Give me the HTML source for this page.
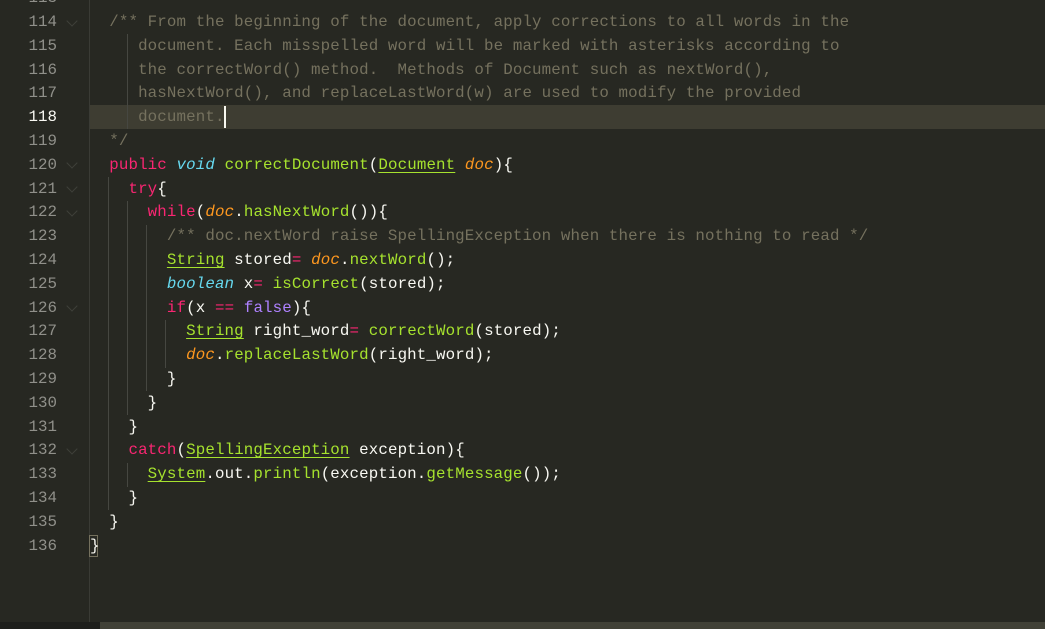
<!DOCTYPE html>
<html><head><meta charset="utf-8"><style>
html,body{margin:0;padding:0;width:1045px;height:629px;overflow:hidden;background:#272822;}
.wrap{position:relative;width:1045px;height:629px;font-family:"Liberation Mono",monospace;font-size:15.8px;}
.ln{position:absolute;left:0;width:57px;text-align:right;color:#90908a;height:23.8px;line-height:23.8px;margin-top:2px}
.code{position:absolute;left:90px;white-space:pre;color:#f8f8f2;height:23.8px;line-height:23.8px;letter-spacing:0.13px;margin-top:2px}
.hl{position:absolute;left:90px;width:955px;height:23.8px;background:#3e3d32;}
.c{color:#75715e}.k{color:#f92672}.s{color:#66d9ef;font-style:italic}.f{color:#a6e22e}.p{color:#fd971f;font-style:italic}.n{color:#ae81ff}
.u{color:#a6e22e;text-decoration:underline;text-underline-offset:3px}
.g{position:absolute;width:1px;background:#464741}
.fold{position:absolute;left:68px;width:7px;height:7px;border-right:1px solid #3f403a;border-bottom:1px solid #3f403a;transform:rotate(45deg);margin-top:2px}
</style></head><body><div class="wrap">
<div class="hl" style="top:105px"></div>
<div style="position:absolute;left:89px;top:0;width:1px;height:622px;background:#3a3b35"></div>
<div style="position:absolute;left:0;top:622px;width:100px;height:7px;background:#1e1f1c"></div>
<div style="position:absolute;left:100px;top:622px;width:945px;height:7px;background:#414137"></div>
<div class="g" style="left:127px;top:34px;height:95px"></div>
<div class="g" style="left:108px;top:177px;height:333px"></div>
<div class="g" style="left:127px;top:201px;height:214px"></div>
<div class="g" style="left:146px;top:225px;height:166px"></div>
<div class="g" style="left:165px;top:320px;height:48px"></div>
<div class="g" style="left:127px;top:463px;height:24px"></div>
<div style="position:absolute;left:224px;top:106px;width:2px;height:22px;background:#f8f8f0"></div>
<div style="position:absolute;left:89px;top:535px;width:9px;height:22px;border:1px solid #75715e;box-sizing:border-box"></div>

<div class="ln" style="top:-14.8px">113</div>
<div class="ln" style="top:9px">114</div><div class="fold" style="top:15px"></div>
<div class="ln" style="top:32.8px">115</div>
<div class="ln" style="top:56.6px">116</div>
<div class="ln" style="top:80.4px">117</div>
<div class="ln" style="top:104.2px;color:#f8f8f2">118</div>
<div class="ln" style="top:128px">119</div>
<div class="ln" style="top:151.8px">120</div><div class="fold" style="top:157px"></div>
<div class="ln" style="top:175.6px">121</div><div class="fold" style="top:181px"></div>
<div class="ln" style="top:199.4px">122</div><div class="fold" style="top:205px"></div>
<div class="ln" style="top:223.2px">123</div>
<div class="ln" style="top:247px">124</div>
<div class="ln" style="top:270.8px">125</div>
<div class="ln" style="top:294.6px">126</div><div class="fold" style="top:300px"></div>
<div class="ln" style="top:318.4px">127</div>
<div class="ln" style="top:342.2px">128</div>
<div class="ln" style="top:366px">129</div>
<div class="ln" style="top:389.8px">130</div>
<div class="ln" style="top:413.6px">131</div>
<div class="ln" style="top:437.4px">132</div><div class="fold" style="top:443px"></div>
<div class="ln" style="top:461.2px">133</div>
<div class="ln" style="top:485px">134</div>
<div class="ln" style="top:508.8px">135</div>
<div class="ln" style="top:532.6px">136</div>

<div class="code" style="top:9px">  <span class="c">/** From the beginning of the document, apply corrections to all words in the</span></div>
<div class="code" style="top:32.8px">     <span class="c">document. Each misspelled word will be marked with asterisks according to</span></div>
<div class="code" style="top:56.6px">     <span class="c">the correctWord() method.  Methods of Document such as nextWord(),</span></div>
<div class="code" style="top:80.4px">     <span class="c">hasNextWord(), and replaceLastWord(w) are used to modify the provided</span></div>
<div class="code" style="top:104.2px">     <span class="c">document.</span></div>
<div class="code" style="top:128px">  <span class="c">*/</span></div>
<div class="code" style="top:151.8px">  <span class="k">public</span> <span class="s">void</span> <span class="f">correctDocument</span>(<span class="u">Document</span> <span class="p">doc</span>){</div>
<div class="code" style="top:175.6px">    <span class="k">try</span>{</div>
<div class="code" style="top:199.4px">      <span class="k">while</span>(<span class="p">doc</span>.<span class="f">hasNextWord</span>()){</div>
<div class="code" style="top:223.2px">        <span class="c">/** doc.nextWord raise SpellingException when there is nothing to read */</span></div>
<div class="code" style="top:247px">        <span class="u">String</span> stored<span class="k">=</span> <span class="p">doc</span>.<span class="f">nextWord</span>();</div>
<div class="code" style="top:270.8px">        <span class="s">boolean</span> x<span class="k">=</span> <span class="f">isCorrect</span>(stored);</div>
<div class="code" style="top:294.6px">        <span class="k">if</span>(x <span class="k">==</span> <span class="n">false</span>){</div>
<div class="code" style="top:318.4px">          <span class="u">String</span> right_word<span class="k">=</span> <span class="f">correctWord</span>(stored);</div>
<div class="code" style="top:342.2px">          <span class="p">doc</span>.<span class="f">replaceLastWord</span>(right_word);</div>
<div class="code" style="top:366px">        }</div>
<div class="code" style="top:389.8px">      }</div>
<div class="code" style="top:413.6px">    }</div>
<div class="code" style="top:437.4px">    <span class="k">catch</span>(<span class="u">SpellingException</span> exception){</div>
<div class="code" style="top:461.2px">      <span class="u">System</span>.out.<span class="f">println</span>(exception.<span class="f">getMessage</span>());</div>
<div class="code" style="top:485px">    }</div>
<div class="code" style="top:508.8px">  }</div>
<div class="code" style="top:532.6px">}</div>
</div></body></html>
